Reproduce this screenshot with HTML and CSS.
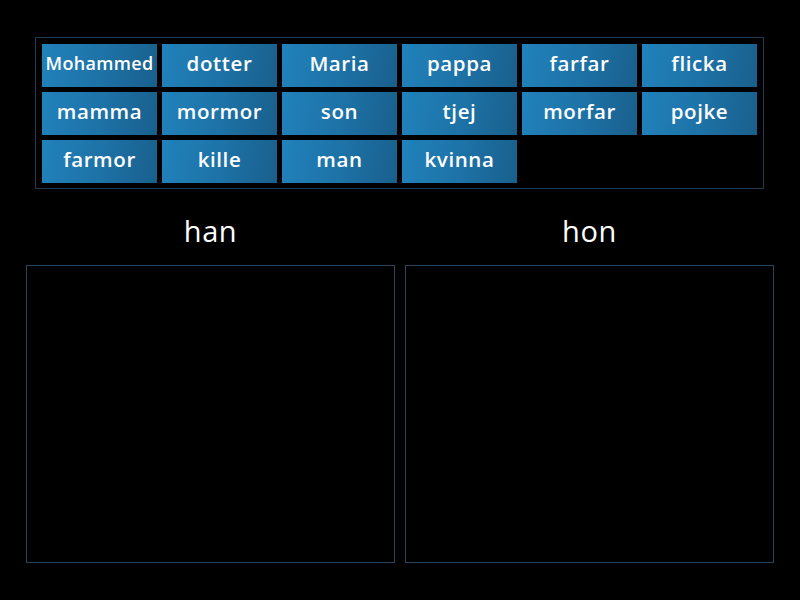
FILE: index.html
```html
<!DOCTYPE html>
<html lang="sv">
<head>
<meta charset="utf-8">
<title>han / hon</title>
<link rel="stylesheet" href="styles.css">
</head>
<body>
<main class="page">
  <section class="bank">
    <div class="tile small">Mohammed</div>
    <div class="tile">dotter</div>
    <div class="tile">Maria</div>
    <div class="tile">pappa</div>
    <div class="tile">farfar</div>
    <div class="tile">flicka</div>
    <div class="tile">mamma</div>
    <div class="tile">mormor</div>
    <div class="tile">son</div>
    <div class="tile">tjej</div>
    <div class="tile">morfar</div>
    <div class="tile">pojke</div>
    <div class="tile">farmor</div>
    <div class="tile">kille</div>
    <div class="tile">man</div>
    <div class="tile">kvinna</div>
  </section>
  <section class="groups">
    <div class="group">
      <h2 class="title">han</h2>
      <div class="drop"></div>
    </div>
    <div class="group">
      <h2 class="title">hon</h2>
      <div class="drop"></div>
    </div>
  </section>
</main>
</body>
</html>
```

FILE: styles.css
```css
html, body {
  margin: 0;
  padding: 0;
  background: #000;
  height: 100%;
}
body {
  font-family: "Open Sans", "Noto Sans", "Liberation Sans", sans-serif;
  color: #fff;
}
.page {
  width: 800px;
  height: 600px;
  padding-top: 37px;
  box-sizing: border-box;
}
.bank {
  margin-left: 35px;
  width: 729px;
  box-sizing: border-box;
  border: 1px solid #1d3a50;
  padding: 6px 6px 5px 6px;
  display: grid;
  grid-template-columns: repeat(6, 115px);
  grid-auto-rows: 43px;
  gap: 5px;
}
.tile {
  background: linear-gradient(100deg, #2182bb 0%, #1d71a5 55%, #195f8c 100%);
  display: flex;
  align-items: center;
  justify-content: center;
  font-size: 20.5px;
  font-weight: 600;
  letter-spacing: 0.6px;
  padding-bottom: 6px;
  box-sizing: border-box;
}
.tile.small {
  font-size: 18px;
  letter-spacing: 0.3px;
}
.groups {
  display: flex;
  gap: 10px;
  margin-left: 26px;
}
.group {
  width: 369px;
  display: flex;
  flex-direction: column;
}
.title {
  margin: 0;
  height: 76px;
  box-sizing: border-box;
  padding-top: 24px;
  text-align: center;
  font-size: 29px;
  font-weight: 500;
  letter-spacing: 0.6px;
  line-height: 36px;
}
.drop {
  height: 298px;
  border: 1px solid #26445a;
  box-sizing: border-box;
}
```
